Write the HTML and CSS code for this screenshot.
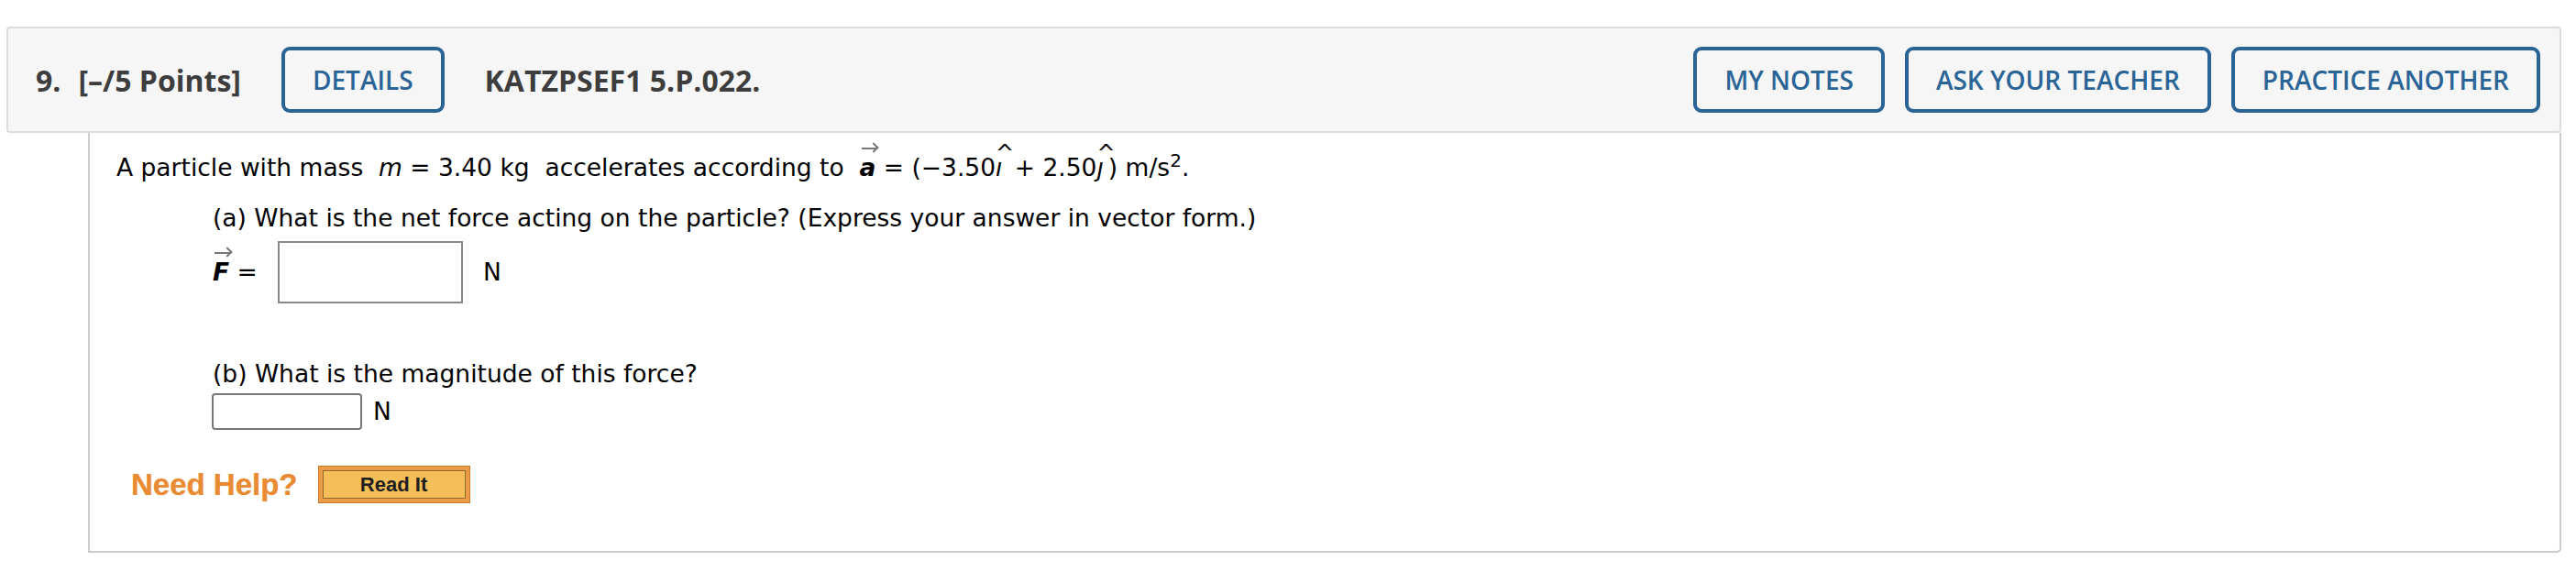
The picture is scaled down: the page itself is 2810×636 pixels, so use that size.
FILE: index.html
```html
<!DOCTYPE html>
<html lang="en">
<head>
    <meta charset="UTF-8">
    <title>Question 9</title>
    <link rel="stylesheet" href="styles.css">
</head>
<body>
<div class="question">
    <div class="qhead">
        <span class="qnum">9.</span>
        <span class="qpts">[&ndash;/5 Points]</span>
        <button class="btn details">DETAILS</button>
        <span class="qcode">KATZPSEF1 5.P.022.</span>
        <div class="actions">
            <button class="btn">MY NOTES</button>
            <button class="btn">ASK YOUR TEACHER</button>
            <button class="btn">PRACTICE ANOTHER</button>
        </div>
    </div>
    <div class="qbody">
        <p class="stem">A particle with mass &nbsp;<i>m</i> = 3.40 kg &nbsp;accelerates according to &nbsp;<b class="vec">a</b> = (&minus;3.50<span class="hat">&#305;</span> + 2.50<span class="hat">&#567;</span>) m/s<sup>2</sup>.</p>
        <div class="part">
            <p>(a) What is the net force acting on the particle? (Express your answer in vector form.)</p>
            <div class="answer big">
                <span class="lbl"><b class="vec">F</b> =</span>
                <input type="text" class="box">
                <span>N</span>
            </div>
        </div>
        <div class="part second">
            <p>(b) What is the magnitude of this force?</p>
            <div class="answer">
                <input type="text" class="box small">
                <span>N</span>
            </div>
        </div>
        <div class="help">
            <span class="needhelp">Need Help?</span>
            <button class="readit"><span>Read It</span></button>
        </div>
    </div>
</div>
</body>
</html>
```

FILE: styles.css
```css
*{
    margin: 0;
    padding: 0;
    box-sizing: border-box;
}
body{
    padding: 29px 16px 0 7px;
    background: #fff;
}
.qhead{
    display: flex;
    align-items: center;
    height: 116px;
    padding: 0 21px 0 30px;
    background: #f6f6f6;
    border: 2px solid #dcdcdc;
    border-radius: 4px;
    font-family: "Open Sans", sans-serif;
    color: #3d3d3d;
}
.qnum,
.qpts,
.qcode{
    font-size: 32px;
    font-weight: 700;
    white-space: nowrap;
}
.qpts{
    margin-left: 19px;
}
.btn{
    height: 72px;
    padding: 0 30px;
    border: 4px solid #2a6496;
    border-radius: 9px;
    background: transparent;
    color: #2a6496;
    font-family: "Open Sans", sans-serif;
    font-size: 28px;
    font-weight: 600;
    white-space: nowrap;
}
.details{
    margin-left: 44px;
}
.qcode{
    margin-left: 44px;
}
.actions{
    margin-left: auto;
    display: flex;
    gap: 22px;
}
.qbody{
    margin-left: 89px;
    padding: 20px 30px 52px 29px;
    border: 2px solid #cccccc;
    border-top: 0;
    border-radius: 0 0 5px 0;
    font-family: "DejaVu Sans", Verdana, sans-serif;
    font-size: 26.5px;
    line-height: 36px;
    color: #000;
}
.vec{
    position: relative;
    display: inline-block;
    font-style: italic;
}
.vec::before{
    content: "";
    position: absolute;
    left: 2px;
    right: -1px;
    top: -4px;
    height: 2px;
    background: #777;
}
.vec::after{
    content: "";
    position: absolute;
    right: -2px;
    top: -8px;
    width: 6px;
    height: 6px;
    border-top: 2px solid #777;
    border-right: 2px solid #777;
    transform: rotate(45deg);
}
.hat{
    position: relative;
    display: inline-block;
    margin-right: 5px;
    font-style: italic;
}
.hat::after{
    content: "^";
    position: absolute;
    left: 0;
    top: -16px;
    font-style: normal;
    font-size: 24px;
}
sup{
    font-size: 20px;
    line-height: 0;
}
.part{
    margin: 19px 0 0 105px;
}
.answer{
    display: flex;
    align-items: center;
    gap: 22px;
    margin-top: 7px;
}
.lbl{
    width: 49px;
    white-space: nowrap;
}
.box{
    width: 202px;
    height: 68px;
    border: 2px solid #888;
    background: #fff;
}
.part.second{
    margin-top: 59px;
}
.second .answer{
    gap: 12px;
    margin-top: 3px;
    margin-left: -1px;
}
.box.small{
    width: 164px;
    height: 40px;
    border-color: #777;
    border-radius: 4px;
}
.help{
    display: flex;
    align-items: center;
    gap: 22px;
    margin: 39px 0 0 16px;
}
.needhelp{
    font-family: "Liberation Sans", Arial, sans-serif;
    font-size: 33px;
    font-weight: 700;
    color: #e98b33;
    text-shadow: 0 0 1px rgba(233,139,51,0.6);
}
.readit{
    width: 166px;
    height: 41px;
    padding: 4px;
    border: 1px solid #c97a2c;
    background: #eb9b44;
}
.readit span{
    display: block;
    height: 100%;
    border: 1px solid #8d6a34;
    background: #f4bf58;
    font-family: "Liberation Sans", Arial, sans-serif;
    font-size: 22px;
    font-weight: 700;
    line-height: 29px;
    color: #1e1e1e;
}
```
